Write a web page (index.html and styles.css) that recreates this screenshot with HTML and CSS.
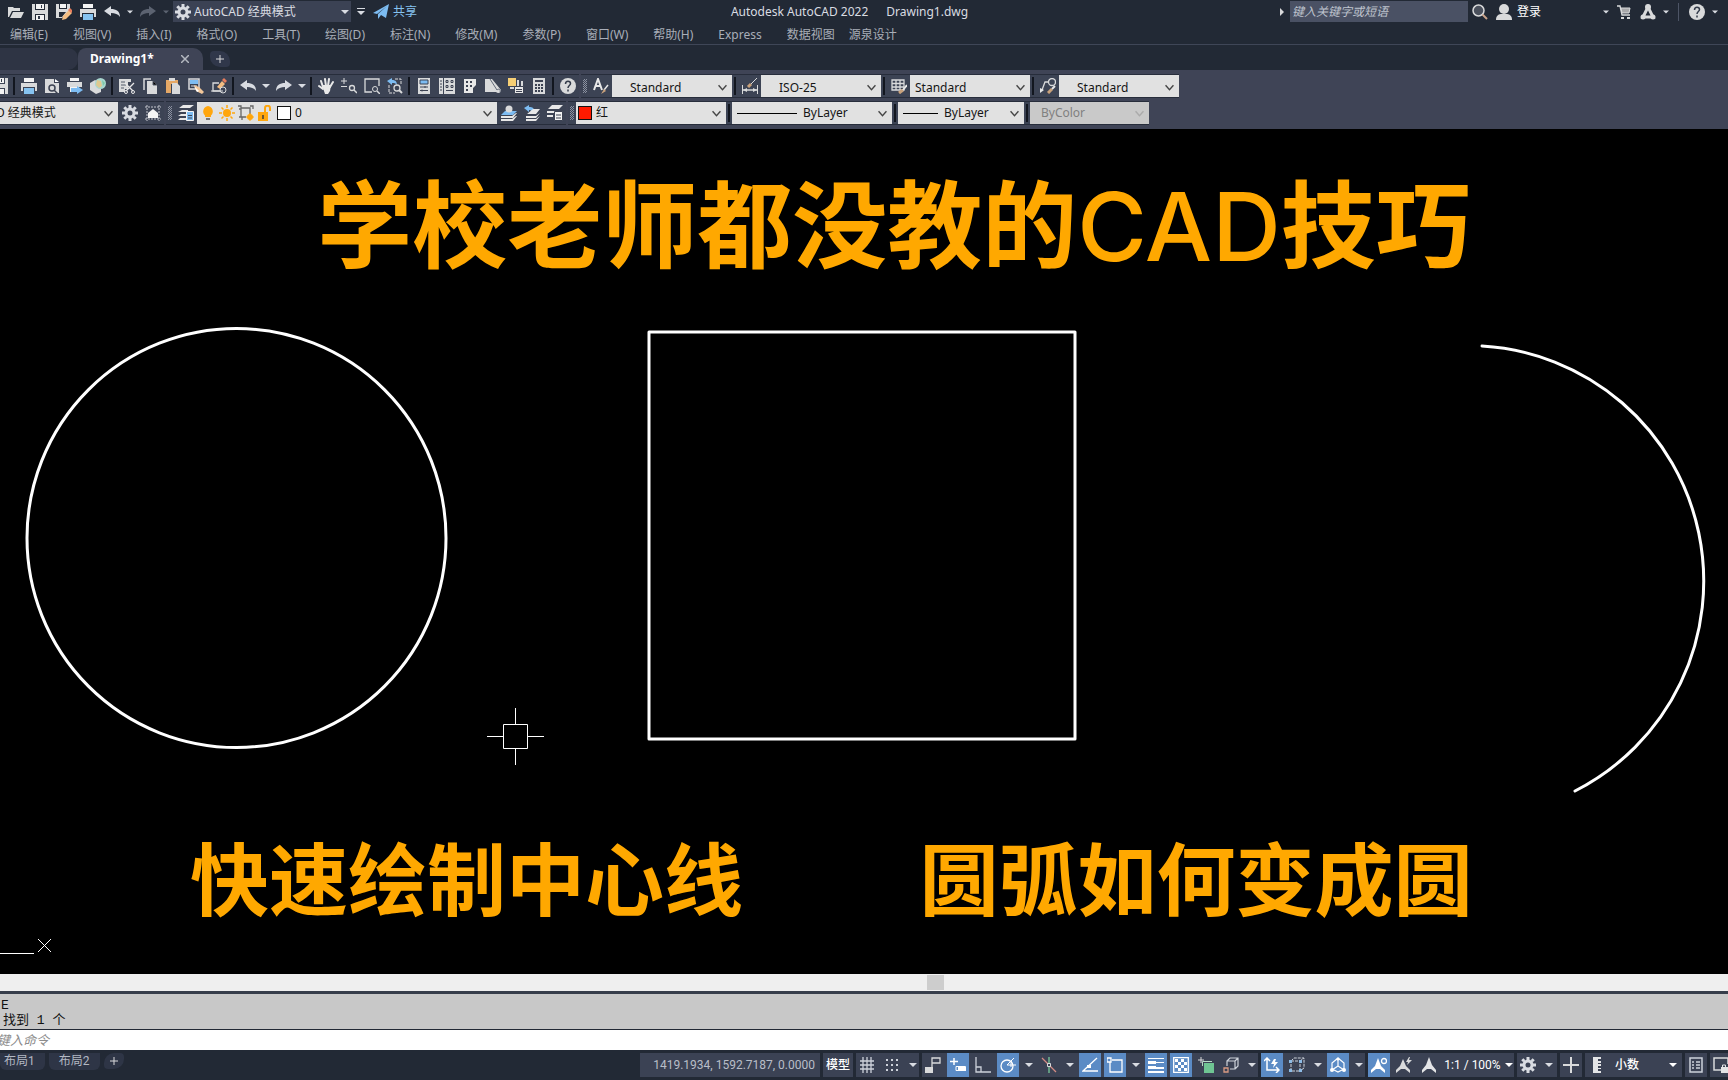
FILE: index.html
```html
<!DOCTYPE html>
<html lang="zh-CN">
<head>
<meta charset="utf-8">
<meta name="viewport" content="width=device-width, initial-scale=1">
<title>Autodesk AutoCAD 2022 - Drawing1.dwg</title>
<link rel="stylesheet" href="styles.css">
</head>
<body>
<svg class="sprite" aria-hidden="true">
  <symbol id="open" viewBox="0 0 16 16"><path fill="#d9dadb" d="M0 13V3h5l1 1h6v3H4L1 13zM5 8h11l-3 6H2z"/></symbol>
  <symbol id="save" viewBox="0 0 16 16"><path fill="#d9dadb" fill-rule="evenodd" d="M0 0h16v16H0zM3 0v6h10V0zM3 10v6h10v-6z"/><path fill="#f4f4f4" d="M4 0h8v5H4zM4 11h8v5H4z"/><path fill="#333b4a" d="M6 12h2v3H6zM9 1h1v3H9z"/></symbol>
  <symbol id="saveas" viewBox="0 0 16 16"><path fill="#d9dadb" fill-rule="evenodd" d="M0 0h14v6l-8 8H0zM3 0v5h8V0zM3 8v5h3l4-5z"/><path fill="#f4f4f4" d="M4 0h6v4H4z"/><path fill="#f4bd82" d="M7 12l6-6 3 3-6 6-4 1z"/><path fill="#e87d5c" d="M12 6l2-2 3 3-2 2z"/></symbol>
  <symbol id="print" viewBox="0 0 16 16"><path fill="#f4f4f4" d="M3 0h10v4H3z"/><path fill="#d9dadb" d="M0 5h16v8h-2V9H2v4H0z"/><path fill="#86c3f0" d="M3 10h10v6H3z"/></symbol>
  <symbol id="undo" viewBox="0 0 16 16"><path fill="currentColor" d="M0 7l7-5v3c5 0 9 2 9 8-2-3-5-4-9-4v3z"/></symbol>
  <symbol id="redo" viewBox="0 0 16 16"><path fill="currentColor" d="M16 7L9 2v3c-5 0-9 2-9 8 2-3 5-4 9-4v3z"/></symbol>
  <symbol id="caret" viewBox="0 0 8 8"><path fill="currentColor" d="M0 2h8L4 6z"/></symbol>
  <symbol id="morecaret" viewBox="0 0 8 8"><path fill="currentColor" d="M0 0h8v1H0zM0 3h8L4 7z"/></symbol>
  <symbol id="gear" viewBox="0 0 16 16"><circle cx="8" cy="8" r="4" fill="none" stroke="currentColor" stroke-width="3"/><path stroke="currentColor" stroke-width="3" d="M8 0v3M8 13v3M0 8h3M13 8h3M2.3 2.3l2 2M11.700 11.700l2 2M2.300 13.700l2-2M11.700 4.300l2-2"/></symbol>
  <symbol id="plane" viewBox="0 0 16 16"><path fill="#7dbcf2" d="M0 9L16 0l-3 14-5-3-3 4v-5L14 2 4 10z"/></symbol>
  <symbol id="find" viewBox="0 0 16 16"><circle cx="6.500" cy="6.500" r="5.500" fill="#4a505c" stroke="#d9dadb" stroke-width="1.500"/><path stroke="#c9a28a" stroke-width="2" d="M10.500 10.500l4.500 4.500"/></symbol>
  <symbol id="user" viewBox="0 0 16 16"><circle cx="8" cy="5" r="5" fill="#d9dadb"/><path fill="#d9dadb" d="M0 16c0-5 3-6 6-6h4c3 0 6 1 6 6z"/></symbol>
  <symbol id="cart" viewBox="0 0 16 16"><path fill="none" stroke="#d9dadb" stroke-width="1.300" d="M1 2h3l2 9h8"/><path fill="#a9a9ab" stroke="#d9dadb" d="M5 4h9l-1 5H6z"/><path fill="#d9dadb" d="M5 13h3v2H5zM11 13h3v2h-3z"/></symbol>
  <symbol id="app" viewBox="0 0 16 16"><path fill="none" stroke="#d9dadb" stroke-width="3" d="M8 3L3 13h10z"/><circle cx="8" cy="3" r="3" fill="#d9dadb"/><circle cx="3" cy="13" r="2.500" fill="#d9dadb"/><circle cx="13" cy="13" r="2.500" fill="#d9dadb"/></symbol>
  <symbol id="help" viewBox="0 0 16 16"><circle cx="8" cy="8" r="8" fill="#d9dadb"/><path fill="none" stroke="#333b4a" stroke-width="1.500" d="M5.500 6c0-4 5-3.500 5-.5C10.500 7.500 8 7.500 8 10M8 11.500v2"/></symbol>
  <symbol id="preview" viewBox="0 0 16 16"><path fill="#d9dadb" d="M1 1h9v4h5v10H1z"/><path fill="#fff" d="M11 1l4 3h-4z"/><circle cx="8" cy="10" r="3" fill="#d9dadb" stroke="#3c4252" stroke-width="1.500"/><path stroke="#3c4252" stroke-width="1.500" d="M10 12l4 4"/></symbol>
  <symbol id="publish" viewBox="0 0 16 16"><path fill="#f4f4f4" d="M3 0h9v3H3z"/><path fill="#d9dadb" d="M0 4h15v5H0z"/><path fill="#f4f4f4" d="M3 9h9v5H3z"/><path fill="#7dbcf2" d="M4 10h6V8l6 4-6 4v-2H4z"/></symbol>
  <symbol id="globe" viewBox="0 0 16 16"><path fill="#d9dadb" d="M0 5l5-3 6 3v9l-5 2-6-4z"/><circle cx="10.500" cy="5.500" r="5.500" fill="#a8d6ce"/><path fill="#dfc98f" d="M7 2l4 1 1 5-3 2-3-3z"/><path fill="#7dc7a8" d="M12 2l3 3-2 3z"/></symbol>
  <symbol id="cut" viewBox="0 0 16 16"><path fill="#d9dadb" d="M0 1h12v3H9v7H6v3H0z"/><path stroke="#555c6b" d="M2 4h4M2 7h5M2 10h3"/><path fill="none" stroke="#e8e8e8" stroke-width="1.300" d="M6 5l8 8M15 5l-8 8"/><circle cx="7" cy="14" r="1.500" fill="none" stroke="#e8e8e8"/><circle cx="14" cy="14" r="1.500" fill="none" stroke="#e8e8e8"/></symbol>
  <symbol id="copy" viewBox="0 0 16 16"><path fill="none" stroke="#d9dadb" stroke-width="1.500" d="M2 12V1h7"/><path fill="#d9dadb" d="M5 3h6l4 4v9H5z"/><path stroke="#555c6b" d="M11 3v4h4"/></symbol>
  <symbol id="paste" viewBox="0 0 16 16"><path fill="#e5a866" d="M1 2h12v4H6v9H1z"/><path fill="#d9dadb" d="M4 0h6v3H4zM7 5h5l3 3v8H7z"/></symbol>
  <symbol id="match" viewBox="0 0 16 16"><path fill="none" stroke="#d9dadb" stroke-width="1.500" d="M1 1h10v10H1z"/><path fill="#7dbcf2" d="M2 2h8v4H2z"/><path stroke="#d9dadb" d="M3 8h6"/><path fill="#f2c79a" d="M6 7l5 2 5 5-2 2-6-3z"/><path fill="#fff" d="M6 8l5 5-2 1z"/></symbol>
  <symbol id="blockedit" viewBox="0 0 16 16"><path fill="none" stroke="#d9dadb" stroke-width="1.300" d="M8 5H2v8h7"/><path stroke="#d9dadb" d="M0 13h12"/><path fill="#f4bd82" d="M6 9l5-6 3 3-5 5z"/><path fill="#e87d5c" d="M11 2l2-2 3 3-2 2z"/><circle cx="12" cy="12" r="3" fill="none" stroke="#d9dadb"/></symbol>
  <symbol id="hand" viewBox="0 0 16 16"><path fill="none" stroke="#e8e8e8" stroke-width="2" stroke-linecap="round" d="M5 9L3 3M8 8L7 1M10 8l1-7M12 9l3-5M5 11L1 8"/><path fill="#e8e8e8" d="M4 7h9l-1 6-2 3H7z"/></symbol>
  <symbol id="zoompm" viewBox="0 0 16 16"><path stroke="#d9dadb" d="M3 0v6M0 3h6M0 8.500h6"/><circle cx="11" cy="10" r="2.500" fill="none" stroke="#d9dadb" stroke-width="1.300"/><path stroke="#d9dadb" stroke-width="1.500" d="M13 12l3 3"/></symbol>
  <symbol id="zoomwin" viewBox="0 0 16 16"><path fill="none" stroke="#d9dadb" stroke-width="1.300" d="M8 14H1V1h14v7"/><circle cx="11" cy="11" r="2.500" fill="none" stroke="#d9dadb"/><path stroke="#d9dadb" stroke-width="1.500" d="M13 13l3 3"/></symbol>
  <symbol id="zoomprev" viewBox="0 0 16 16"><path fill="none" stroke="#d9dadb" stroke-dasharray="3 1" d="M2 7v8h6M8 1h6v6"/><path fill="#7dbcf2" d="M0 3l5-3v2c4 0 5 2 5 6-1-3-2-3-5-3v2z"/><circle cx="10" cy="10" r="3" fill="none" stroke="#d9dadb" stroke-width="1.300"/><path stroke="#d9dadb" stroke-width="2" d="M12 12l3 3"/></symbol>
  <symbol id="props" viewBox="0 0 16 16"><path fill="#d9dadb" d="M2 0h12v16H2z"/><path fill="#7dbcf2" stroke="#3c4252" d="M4 2h8v4H4z"/><path stroke="#3c4252" d="M4 9h8M4 12.500h8M9 8v2M6 11.500v2"/></symbol>
  <symbol id="center" viewBox="0 0 16 16"><path fill="#d9dadb" d="M0 0h4v16H0zM5 0h11v16H5z"/><path stroke="#3c4252" d="M1 3h2M1 6h2M1 9h2M1 12h2"/><path fill="none" stroke="#3c4252" d="M7 2.500h2v2H7zM12 2.500h2v2h-2zM7 7.500h2v2H7zM12 7.500h2v2h-2zM7 12.500h7"/></symbol>
  <symbol id="palette" viewBox="0 0 16 16"><path fill="#e8e8e8" d="M2 1h12v6l-3 3v5H2z"/><path fill="#3c4252" d="M4 3h2v2H4zM8 3h2v2H8zM4 7h2v2H4zM8 7h2v2H8zM4 11h2v2H4z"/></symbol>
  <symbol id="sheet" viewBox="0 0 16 16"><path fill="#d9dadb" d="M0 1h7l9 11c0 3-3 4-5 2H0z"/><path fill="none" stroke="#626978" d="M5 1l7 11c2-2 4 0 3 2"/></symbol>
  <symbol id="markup" viewBox="0 0 16 16"><path fill="#f6cf75" d="M0 0h8v8H0z"/><path stroke="#d9dadb" stroke-width="2" d="M10 2v7M14 3v7M2 10h5"/><path fill="#e8e8e8" stroke="#3c4252" d="M6.500 8.500h9v7h-9z"/><path stroke="#3c4252" d="M8 11.500h6M8 13.500h6"/></symbol>
  <symbol id="calc" viewBox="0 0 16 16"><path fill="#d9dadb" d="M2 0h12v16H2z"/><path fill="#3c4252" d="M4 2h8v2H4zM4 6h2v2H4zM7 6h2v2H7zM10 6h2v2h-2zM4 9h2v2H4zM7 9h2v2H7zM10 9h2v2h-2zM4 12h2v2H4zM7 12h2v2H7zM10 12h2v2h-2z"/></symbol>
  <symbol id="textstyle" viewBox="0 0 16 16"><path fill="none" stroke="#e8e8e8" stroke-width="2" d="M1 12L5 1l4 11M2 8h6"/><path stroke="#e8e8e8" stroke-width="1.500" d="M15 7l-4 5"/><path fill="#c9a27c" d="M11 11l2 2-5 3z"/></symbol>
  <symbol id="dimstyle" viewBox="0 0 16 16"><path stroke="#d9dadb" d="M.5 7v9M15.500 7v9"/><path stroke="#d9dadb" stroke-width="1.500" d="M1 12h14"/><path fill="#d9dadb" d="M1 12l4-2v4zM15 12l-4-2v4z"/><path stroke="#c9a27c" stroke-width="3" d="M6 9l3-3"/><path stroke="#d9dadb" d="M9 6l6-6"/></symbol>
  <symbol id="tablestyle" viewBox="0 0 16 16"><path fill="none" stroke="#d9dadb" stroke-width="1.300" d="M1 2h12v10H1zM1 5.500h12M1 9h12M5 2v10M9 2v10"/><path stroke="#c9a27c" stroke-width="3" d="M8 15l4-3"/><path stroke="#e8e8e8" stroke-width="2" d="M12 12l4-5"/></symbol>
  <symbol id="leader" viewBox="0 0 16 16"><circle cx="12" cy="4" r="3.500" fill="none" stroke="#d9dadb" stroke-width="1.300"/><path fill="none" stroke="#d9dadb" stroke-width="1.300" d="M9 4H5L2 12"/><path fill="#e8e8e8" d="M0 10l4 2-4 3z"/><path stroke="#c9a27c" stroke-width="3" d="M8 15l4-4"/><path stroke="#e8e8e8" stroke-width="2" d="M12 11l3-3"/></symbol>
  <symbol id="wsframe" viewBox="0 0 16 16"><path fill="none" stroke="#c4c7ce" stroke-dasharray="2 1" d="M2 0v16M14 0v16M0 2h16M0 14h16"/><path fill="#f4f4f4" d="M3 8l5-4 5 4v5H3z"/></symbol>
  <symbol id="layers" viewBox="0 0 16 16"><path fill="#e8e8e8" d="M5 0h11l-4 3H1zM4 5h6v2H0zM3 9h5v2H0zM2 13h6v2H0z"/><path fill="#7dbcf2" stroke="#f4f4f4" d="M8.500 6.500h7v9h-7z"/><path stroke="#3c4252" d="M10 10.500h4M10 13h4"/></symbol>
  <symbol id="layercur" viewBox="0 0 16 16"><path fill="#7dbcf2" d="M4 6h12l-4 4H0z"/><circle cx="8" cy="4" r="3.500" fill="#d9dadb"/><path fill="#e8e8e8" d="M0 11h11l4-3h1l-4 5H0zM0 14h11l4-3h1l-4 5H0z"/></symbol>
  <symbol id="layerprev" viewBox="0 0 16 16"><path fill="#7dbcf2" d="M0 3l5-3v2c4 0 5 1 5 4H7c0-1-1-1-2-1v2z"/><path fill="#e8e8e8" d="M9 4h7l-4 5H3zM2 11h10l4-3-4 5H2zM2 14h10l4-3-4 5H2z"/></symbol>
  <symbol id="layerstate" viewBox="0 0 16 16"><path fill="#e8e8e8" d="M5 0h11l-4 4H1zM0 6h8v2H0zM0 10h6v2H0z"/><path fill="#f4f4f4" stroke="#3c4252" d="M7.500 6.500h8v9h-8z"/><path stroke="#3c4252" d="M9 10h5M9 13h5"/></symbol>
  <symbol id="bulb" viewBox="0 0 16 16"><path fill="#ffa60d" d="M8 1a5.500 5.500 0 0 1 3 9.500V12H5v-1.500A5.500 5.500 0 0 1 8 1z"/><path fill="#777" d="M6 13h4v2H6z"/></symbol>
  <symbol id="sun" viewBox="0 0 16 16"><circle cx="8" cy="8" r="4" fill="#ffa60d"/><path stroke="#ffa60d" stroke-width="1.500" d="M8 0v3M8 13v3M0 8h3M13 8h3M2.500 2.500l2 2M11.500 11.500l2 2M2.500 13.500l2-2M11.500 4.500l2-2"/></symbol>
  <symbol id="vpfreeze" viewBox="0 0 16 16"><path fill="none" stroke="#666" stroke-width="1.300" d="M3 3h9v6M3 3v9h5M0 1h3v3H1M12 1h3v3M1 12h3v3"/><circle cx="12" cy="12" r="3" fill="#ffa60d"/><path stroke="#ffa60d" d="M12 8v8M8 12h8"/></symbol>
  <symbol id="unlock" viewBox="0 0 16 16"><path fill="#ffa60d" d="M1 7h10v9H1z"/><path fill="none" stroke="#ffa60d" stroke-width="2" d="M8 8V3c0-3 5-3 5 0v3"/><path fill="#6b5630" d="M5 10h2v4H5z"/></symbol>
  <symbol id="chev" viewBox="0 0 8 8"><path fill="none" stroke="currentColor" stroke-width="1.200" d="M.5 2L4 6l3.500-4"/></symbol>
  <symbol id="grid" viewBox="0 0 16 16"><path stroke="#cdd2da" stroke-width="1.300" d="M4 0v16M8 0v16M12 0v16M1 4h14M1 8h14M1 12h14"/></symbol>
  <symbol id="dots" viewBox="0 0 16 16"><path stroke="#cdd2da" stroke-width="2" stroke-dasharray="2 3" d="M2 3h12M2 8h12M2 13h12"/></symbol>
  <symbol id="infer" viewBox="0 0 16 16"><path fill="#d9dadb" d="M0 10h8v6H0z"/><path fill="none" stroke="#d9dadb" stroke-width="1.300" d="M7 10V1h8v5H7"/></symbol>
  <symbol id="dyn" viewBox="0 0 16 16"><path stroke="#fff" stroke-width="1.500" d="M4 1v7M0 4.500h8"/><path fill="none" stroke="#fff" d="M6 9.500h9.500v4H6z"/><path fill="#fff" d="M8 10h8v4H8z"/></symbol>
  <symbol id="ortho" viewBox="0 0 16 16"><path fill="none" stroke="#cdd2da" stroke-width="1.300" d="M1 0v15h15M1 10h5v5"/></symbol>
  <symbol id="polar" viewBox="0 0 16 16"><circle cx="7" cy="9" r="6" fill="none" stroke="#fff" stroke-width="1.300"/><path fill="none" stroke="#fff" d="M16 8H7l7-7M11 4v6"/></symbol>
  <symbol id="iso" viewBox="0 0 16 16"><path stroke="#77c99a" stroke-width="1.300" d="M8 0v6M8 10v6"/><path stroke="#d48b84" stroke-width="1.300" d="M1 1l6 6M9 9l6 6"/><path fill="none" stroke="#d9dadb" d="M6.500 6.500h3v3h-3z"/></symbol>
  <symbol id="track" viewBox="0 0 16 16"><path fill="none" stroke="#fff" stroke-width="1.300" d="M15 1L1 14h15"/><path fill="#fff" d="M5 8h4v3H5z"/></symbol>
  <symbol id="osnap" viewBox="0 0 16 16"><path fill="none" stroke="#fff" stroke-width="1.300" d="M5 3h10v12H3V5M0 1h4v4H0z"/></symbol>
  <symbol id="lwt" viewBox="0 0 16 16"><path fill="#fff" d="M0 1h16v1H0zM0 4h8v3H0zM8 5h8v1H8zM0 9h8v3H0zM8 10h8v2H8zM0 14h16v2H0z"/></symbol>
  <symbol id="transp" viewBox="0 0 16 16"><path fill="none" stroke="#fff" stroke-width="1.300" d="M.7.7h14.600v14.600H.7z"/><path stroke="#fff" stroke-width="3" stroke-dasharray="3 3" d="M2 3.500h12M5 6.500h9M2 9.500h12M5 12.500h9"/></symbol>
  <symbol id="cycle" viewBox="0 0 16 16"><path stroke="#d9dadb" d="M3 0v6M0 3h6"/><path fill="#6fc593" d="M6 6h10v10H6z"/><path fill="none" stroke="#b8dcc7" d="M4.500 9V4.500H14"/></symbol>
  <symbol id="osnap3" viewBox="0 0 16 16"><path fill="none" stroke="#cdd2da" stroke-width="1.200" d="M4 9V4h8v8H7M4 4l3-3h8v8l-3 3M12 4l3-3"/><path fill="none" stroke="#d99a82" stroke-width="1.300" d="M1 11h4v4H1z"/></symbol>
  <symbol id="ducs" viewBox="0 0 16 16"><path fill="none" stroke="#fff" stroke-width="1.500" d="M3 2v11h12M0 4l3-3 3 3M12 10l3 3-3 3"/><path fill="#fff" d="M10 2L7 7h3l-1 4 5-6h-3l1-3z"/></symbol>
  <symbol id="filter" viewBox="0 0 16 16"><path fill="none" stroke="#cdd2da" stroke-dasharray="3 1" d="M2 4h9v10H2zM2 4l3-3h10v10l-4 3M11 4l4-3"/><path fill="#8ebce6" d="M0 3h3v3H0zM10 3h3v3h-3zM0 12h3v3H0zM10 12h3v3h-3z"/></symbol>
  <symbol id="gizmo" viewBox="0 0 16 16"><path fill="none" stroke="#fff" stroke-width="1.200" d="M8 1l6 5v6l-6 3-6-3V6zM8 1v8l6 4M8 9l-6 4"/><circle cx="8" cy="2" r="1.500" fill="#fff"/><circle cx="2" cy="13" r="2" fill="#fff"/><circle cx="14" cy="13" r="2" fill="#fff"/></symbol>
  <symbol id="anno" viewBox="0 0 16 16"><path fill="#e3e4e6" d="M8 0l3 8 4 5v3l-5-4H6l-5 4v-3l4-5z"/></symbol>
  <symbol id="annovis" viewBox="0 0 16 16"><path fill="#fff" d="M7 1l3 8 4 4v3l-5-4H5l-5 4v-3l4-4z"/><circle cx="13" cy="4" r="2.500" fill="none" stroke="#fff" stroke-width="1.300"/></symbol>
  <symbol id="annoauto" viewBox="0 0 16 16"><path fill="#d9dadb" d="M7 2l3 7 4 4v3l-5-4H5l-5 4v-3l4-4zM13 0l-3 5h2l-1 3 5-5h-3l1-3z"/></symbol>
  <symbol id="plus" viewBox="0 0 16 16"><path stroke="#d9dadb" stroke-width="2" d="M8 0v16M0 8h16"/></symbol>
  <symbol id="ruler" viewBox="0 0 16 16"><path fill="#e3e4e6" d="M4 0h8v2H9v2h3v2H9v1h3v2H9v2h3v1H9v2h3v2H4z"/></symbol>
  <symbol id="quick" viewBox="0 0 16 16"><path fill="none" stroke="#cdd2da" stroke-width="1.500" d="M2 1h12v14H2z"/><path stroke="#cdd2da" stroke-width="1.500" d="M4 5h2M8 5h4M4 8h2M8 8h4M4 11h2M8 11h4"/></symbol>
  <symbol id="lockui" viewBox="0 0 16 16"><path fill="none" stroke="#d9dadb" stroke-width="1.500" d="M8 13H1V1h14v6"/><path fill="#e3e4e6" d="M8 10h8v6H8z"/><path fill="none" stroke="#e3e4e6" d="M9.500 10V8h3v2"/></symbol>
</svg>

<header class="titlebar">
  <div class="quick">
    <button aria-label="打开"><svg><use href="#open"/></svg></button>
    <button aria-label="保存"><svg><use href="#save"/></svg></button>
    <button aria-label="另存为"><svg><use href="#saveas"/></svg></button>
    <button aria-label="打印"><svg><use href="#print"/></svg></button>
    <button aria-label="放弃"><svg><use href="#undo"/></svg></button>
    <button class="drop" aria-label="放弃列表"><svg><use href="#caret"/></svg></button>
    <button class="off" aria-label="重做"><svg><use href="#redo"/></svg></button>
    <button class="drop off" aria-label="重做列表"><svg><use href="#caret"/></svg></button>
  </div>
  <label class="workspace">
    <svg><use href="#gear"/></svg>
    <select aria-label="工作空间"><option>AutoCAD 经典模式</option></select>
    <svg class="tiny"><use href="#caret"/></svg>
  </label>
  <button class="custom" aria-label="自定义"><svg class="tiny"><use href="#morecaret"/></svg></button>
  <button class="share"><svg><use href="#plane"/></svg>共享</button>
  <h1 class="title"><span>Autodesk AutoCAD 2022</span><span>Drawing1.dwg</span></h1>
  <div class="account">
    <span class="expand"></span>
    <input class="search" type="text" placeholder="键入关键字或短语" aria-label="搜索">
    <button class="find" aria-label="查找"><svg><use href="#find"/></svg></button>
    <button class="login"><svg><use href="#user"/></svg>登录</button>
    <button class="drop" aria-label="登录菜单"><svg><use href="#caret"/></svg></button>
    <button class="square" aria-label="购物车"><svg><use href="#cart"/></svg></button>
    <button class="square" aria-label="应用"><svg><use href="#app"/></svg></button>
    <button class="drop" aria-label="应用菜单"><svg><use href="#caret"/></svg></button>
    <span class="bar"></span>
    <button class="square" aria-label="帮助"><svg><use href="#help"/></svg></button>
    <button class="drop" aria-label="帮助菜单"><svg><use href="#caret"/></svg></button>
  </div>
</header>

<nav class="menu">
  <a href="#edit">编辑(E)</a><a href="#view">视图(V)</a><a href="#insert">插入(I)</a><a href="#format">格式(O)</a><a href="#tools">工具(T)</a><a href="#draw">绘图(D)</a><a href="#dim">标注(N)</a><a href="#modify">修改(M)</a><a href="#param">参数(P)</a><a href="#window">窗口(W)</a><a href="#helpmenu">帮助(H)</a><a href="#express">Express</a><a class="addon" href="#data">数据视图</a><a class="addon" href="#yuanquan">源泉设计</a>
</nav>

<div class="tabs">
  <span class="tab-start"></span>
  <div class="tab"><a href="#drawing">Drawing1*</a><button aria-label="关闭"><svg viewBox="0 0 8 8"><path stroke="#b4b8c0" stroke-width="1.500" d="M0 0l8 8M8 0L0 8"/></svg></button></div>
  <button class="newtab" aria-label="新图形"><svg class="tiny"><use href="#plus"/></svg></button>
</div>

<div class="toolbars">
  <div class="row">
    <div class="group first">
      <button aria-label="保存"><svg><use href="#save"/></svg></button><i class="sep"></i>
      <button aria-label="打印"><svg><use href="#print"/></svg></button>
      <button aria-label="打印预览"><svg><use href="#preview"/></svg></button>
      <button aria-label="发布"><svg><use href="#publish"/></svg></button>
      <button aria-label="三维打印"><svg><use href="#globe"/></svg></button><i class="sep"></i>
      <button aria-label="剪切"><svg><use href="#cut"/></svg></button>
      <button aria-label="复制"><svg><use href="#copy"/></svg></button>
      <button aria-label="粘贴"><svg><use href="#paste"/></svg></button>
      <button aria-label="特性匹配"><svg><use href="#match"/></svg></button>
      <button aria-label="块编辑器"><svg><use href="#blockedit"/></svg></button><i class="sep"></i>
      <button aria-label="放弃"><svg><use href="#undo"/></svg></button>
      <button class="drop" aria-label="放弃列表"><svg><use href="#caret"/></svg></button>
      <button aria-label="重做"><svg><use href="#redo"/></svg></button>
      <button class="drop" aria-label="重做列表"><svg><use href="#caret"/></svg></button><i class="sep"></i>
      <button aria-label="平移"><svg><use href="#hand"/></svg></button>
      <button aria-label="实时缩放"><svg><use href="#zoompm"/></svg></button>
      <button aria-label="窗口缩放"><svg><use href="#zoomwin"/></svg></button>
      <button aria-label="缩放上一个"><svg><use href="#zoomprev"/></svg></button><i class="sep"></i>
      <button aria-label="特性"><svg><use href="#props"/></svg></button>
      <button aria-label="设计中心"><svg><use href="#center"/></svg></button>
      <button aria-label="工具选项板"><svg><use href="#palette"/></svg></button>
      <button aria-label="图纸集"><svg><use href="#sheet"/></svg></button>
      <button aria-label="标记集"><svg><use href="#markup"/></svg></button>
      <button aria-label="计算器"><svg><use href="#calc"/></svg></button><i class="sep"></i>
      <button aria-label="帮助"><svg><use href="#help"/></svg></button>
    </div>
    <div class="group spaced">
      <i class="grip"></i>
      <button aria-label="文字样式"><svg><use href="#textstyle"/></svg></button>
      <label class="combo style"><select aria-label="文字样式"><option>Standard</option></select><svg><use href="#chev"/></svg></label><i class="sep"></i>
      <button aria-label="标注样式"><svg><use href="#dimstyle"/></svg></button>
      <label class="combo style"><select aria-label="标注样式"><option>ISO-25</option></select><svg><use href="#chev"/></svg></label><i class="sep"></i>
      <button aria-label="表格样式"><svg><use href="#tablestyle"/></svg></button>
      <label class="combo style flush"><select aria-label="表格样式"><option>Standard</option></select><svg><use href="#chev"/></svg></label><i class="sep"></i>
      <button aria-label="多重引线样式"><svg><use href="#leader"/></svg></button>
      <label class="combo style"><select aria-label="多重引线样式"><option>Standard</option></select><svg><use href="#chev"/></svg></label>
    </div>
  </div>
  <div class="row">
    <div class="group">
      <label class="combo space"><select aria-label="工作空间"><option>AutoCAD 经典模式</option></select><svg><use href="#chev"/></svg></label>
      <button aria-label="工作空间设置"><svg><use href="#gear"/></svg></button>
      <button aria-label="我的工作空间"><svg><use href="#wsframe"/></svg></button>
    </div>
    <div class="group spaced">
      <i class="grip"></i>
      <button aria-label="图层特性"><svg><use href="#layers"/></svg></button>
      <label class="combo layer"><span class="states"><svg><use href="#bulb"/></svg><svg><use href="#sun"/></svg><svg><use href="#vpfreeze"/></svg><svg><use href="#unlock"/></svg></span><i class="swatch white"></i><select aria-label="图层"><option>0</option></select><svg><use href="#chev"/></svg></label>
      <button aria-label="置为当前"><svg><use href="#layercur"/></svg></button>
      <button aria-label="上一个图层"><svg><use href="#layerprev"/></svg></button>
      <button aria-label="图层状态"><svg><use href="#layerstate"/></svg></button>
    </div>
    <div class="group spaced">
      <i class="grip"></i>
      <label class="combo color"><i class="swatch red"></i><select aria-label="颜色"><option>红</option></select><svg><use href="#chev"/></svg></label><i class="sep"></i>
      <label class="combo ltype"><i class="line"></i><select aria-label="线型"><option>ByLayer</option></select><svg><use href="#chev"/></svg></label><i class="sep"></i>
      <label class="combo lweight"><i class="line"></i><select aria-label="线宽"><option>ByLayer</option></select><svg><use href="#chev"/></svg></label><i class="sep"></i>
      <label class="combo disabled"><select aria-label="打印样式" disabled><option>ByColor</option></select><svg><use href="#chev"/></svg></label>
    </div>
  </div>
</div>

<main class="canvas">
  <svg class="drawing" viewBox="0 0 1728 845" preserveAspectRatio="xMidYMid meet" fill="none" stroke="#fff" stroke-width="3">
    <circle cx="236.500" cy="409" r="209.500"/>
    <path stroke-linejoin="round" d="M649 203h426v407H649z"/>
    <path stroke-linecap="round" d="M1482 217A235.500 235.500 0 0 1 1575 662"/>
    <path stroke-width="1" d="M503.500 595.500h24v24h-24zM515.500 595V579M515.500 620v16M503 607.500h-16M528 607.500h16M0 824.500h34M38 810l13 13M51 810l-13 13"/>
  </svg>
  <h2 class="caption top">学校老师都没教的<span>CAD</span>技巧</h2>
  <h2 class="caption left">快速绘制中心线</h2>
  <h2 class="caption right">圆弧如何变成圆</h2>
</main>

<div class="scroll"><i class="thumb"></i></div>
<section class="command">
  <pre class="history">E
<span>找到 1 个</span></pre>
  <input type="text" placeholder="键入命令" aria-label="命令行">
</section>

<footer class="status">
  <div class="layouts"><a href="#layout1">布局1</a><a href="#layout2">布局2</a><button aria-label="新建布局"><svg class="tiny"><use href="#plus"/></svg></button></div>
  <output class="coords">1419.1934, 1592.7187, 0.0000</output>
  <button class="model">模型</button>
  <div class="cells">
    <button aria-label="栅格"><svg><use href="#grid"/></svg></button>
    <button aria-label="捕捉"><svg><use href="#dots"/></svg></button>
    <button class="drop" aria-label="捕捉设置"><svg><use href="#caret"/></svg></button>
  </div>
  <div class="cells">
    <button aria-label="推断约束"><svg><use href="#infer"/></svg></button>
    <button class="on" aria-label="动态输入"><svg><use href="#dyn"/></svg></button>
    <button aria-label="正交"><svg><use href="#ortho"/></svg></button>
    <button class="on" aria-label="极轴追踪"><svg><use href="#polar"/></svg></button>
    <button class="drop" aria-label="极轴设置"><svg><use href="#caret"/></svg></button>
    <button aria-label="等轴测"><svg><use href="#iso"/></svg></button>
    <button class="drop" aria-label="等轴测设置"><svg><use href="#caret"/></svg></button>
    <button class="on" aria-label="对象追踪"><svg><use href="#track"/></svg></button>
    <button class="on" aria-label="对象捕捉"><svg><use href="#osnap"/></svg></button>
    <button class="drop" aria-label="对象捕捉设置"><svg><use href="#caret"/></svg></button>
    <button class="on" aria-label="线宽"><svg><use href="#lwt"/></svg></button>
    <button class="on" aria-label="透明度"><svg><use href="#transp"/></svg></button>
    <button aria-label="选择循环"><svg><use href="#cycle"/></svg></button>
    <button aria-label="三维对象捕捉"><svg><use href="#osnap3"/></svg></button>
    <button class="drop" aria-label="三维捕捉设置"><svg><use href="#caret"/></svg></button>
  </div>
  <div class="cells">
    <button class="on" aria-label="动态 UCS"><svg><use href="#ducs"/></svg></button>
    <button aria-label="选择过滤"><svg><use href="#filter"/></svg></button>
    <button class="drop" aria-label="过滤设置"><svg><use href="#caret"/></svg></button>
    <button class="on" aria-label="小控件"><svg><use href="#gizmo"/></svg></button>
    <button class="drop" aria-label="小控件设置"><svg><use href="#caret"/></svg></button>
  </div>
  <div class="cells">
    <button class="on" aria-label="注释可见性"><svg><use href="#annovis"/></svg></button>
    <button aria-label="自动缩放"><svg><use href="#annoauto"/></svg></button>
    <button aria-label="注释比例"><svg><use href="#anno"/></svg></button>
    <button class="scale">1:1 / 100%<svg class="tiny"><use href="#caret"/></svg></button>
  </div>
  <div class="cells settings">
    <button aria-label="工作空间"><svg><use href="#gear"/></svg></button>
    <button class="drop" aria-label="工作空间列表"><svg><use href="#caret"/></svg></button>
  </div>
  <div class="cells"><button aria-label="注释监视器"><svg><use href="#plus"/></svg></button></div>
  <div class="cells">
    <button class="units"><svg><use href="#ruler"/></svg>小数<svg class="tiny"><use href="#caret"/></svg></button>
  </div>
  <div class="cells"><button aria-label="快捷特性"><svg><use href="#quick"/></svg></button></div>
  <div class="cells"><button aria-label="锁定界面"><svg><use href="#lockui"/></svg></button></div>
</footer>
</body>
</html>
```

FILE: styles.css
```css
* { box-sizing: border-box; }

body {
  margin: 0;
  min-height: 100vh;
  display: flex;
  flex-direction: column;
  overflow-x: hidden;
  background: #222935;
  color: #d9dce2;
  font: 12px/16px "Noto Sans", "Noto Sans CJK SC", sans-serif;
}

button, input, select { font: inherit; color: inherit; }
button {
  display: flex;
  align-items: center;
  justify-content: center;
  flex: none;
  padding: 0;
  border: 0;
  background: none;
  white-space: nowrap;
}
select {
  appearance: none;
  border: 0;
  padding: 0;
  margin: 0;
  background: none;
  flex: 1;
  min-width: 0;
}
select:disabled { opacity: 1; }
a { color: inherit; text-decoration: none; white-space: nowrap; }
svg { display: block; width: 16px; height: 16px; flex: none; }
svg.tiny, .drop svg { width: 8px; height: 8px; }
.sprite { position: absolute; width: 0; height: 0; }
.off { color: #5c6371; }

/* title bar */
.titlebar { display: flex; align-items: center; height: 23px; }
.quick { display: flex; align-items: center; padding-left: 4px; width: 173px; }
.quick button { width: 24px; height: 20px; }
.titlebar .drop { width: 12px; }
.titlebar .drop svg { width: 6px; height: 6px; }
.workspace {
  display: flex;
  align-items: center;
  gap: 3px;
  width: 178px;
  height: 21px;
  padding: 0 2px;
  background: #3b4254;
}
.custom { width: 20px; height: 20px; }
.share { gap: 4px; color: #86c3f0; width: 48px; }
.title {
  flex: 1;
  display: flex;
  justify-content: center;
  gap: 18px;
  margin: 0;
  font-size: 12px;
  font-weight: 400;
  white-space: nowrap;
}
.account { display: flex; align-items: center; }
.expand { border: 4px solid transparent; border-left: 4px solid #d9dadb; border-right: 0; margin-right: 6px; }
.search {
  width: 178px;
  height: 21px;
  padding: 0 2px;
  border: 0;
  background: #4a5164;
}
.search::placeholder { color: #bfc4ce; font-style: italic; opacity: 1; }
.find { width: 24px; }
.login { gap: 5px; justify-content: flex-start; width: 108px; padding-left: 4px; color: #fff; }
.square { width: 24px; }
.bar { width: 1px; height: 18px; margin: 0 6px; background: #4d5566; }
.account .drop:last-child { margin-right: 7px; }

/* menu */
.menu {
  display: flex;
  align-items: center;
  gap: 25px;
  height: 22px;
  padding: 2px 10px 0;
  border-bottom: 1px solid #3f4657;
  color: #a9aeb8;
}
.addon + .addon { margin-left: -11px; }

/* file tabs */
.tabs { display: flex; align-items: flex-end; height: 25px; padding-top: 3px; }
.tab-start { width: 78px; height: 22px; border-radius: 0 10px 10px 0; background: #2e3444; }
.tab {
  display: flex;
  align-items: center;
  justify-content: space-between;
  width: 125px;
  height: 22px;
  padding: 0 14px 0 12px;
  border-radius: 8px 10px 0 0;
  background: #3f4456;
  color: #fff;
  font-weight: 700;
}
.tab button svg { width: 8px; height: 8px; }
.newtab { width: 20px; height: 16px; margin: 0 0 3px 7px; border-radius: 4px 10px 4px 10px; background: #30374a; }

/* toolbars */
.toolbars {
  display: flex;
  flex-direction: column;
  gap: 3px;
  padding: 4px 0;
  background: #3f4456;
}
.row { display: flex; height: 24px; }
.group {
  display: flex;
  align-items: center;
  border: solid #272d3b;
  border-width: 1px 0;
  background: #3c4354;
}
.group.first { margin-left: -12px; }
.group.spaced { margin-left: 2px; }
.group button { width: 23px; height: 22px; }
.group .drop { width: 13px; }
.sep { width: 6px; height: 18px; flex: none; border: solid #3c4354; border-width: 0 2px; background: #12161f; }
.grip { width: 8px; height: 14px; flex: none; border: solid #3c4354; border-width: 0 2px; background: repeating-conic-gradient(#8b91a0 0 25%, #3c4354 0 50%) 0 0 / 2px 2px; }
.combo {
  display: flex;
  align-items: center;
  flex: none;
  height: 22px;
  padding: 0 5px 0 18px;
  background: #e1e1e1;
  color: #151515;
}
.combo > svg { width: 9px; height: 9px; color: #444; }
.combo.style { width: 120px; padding-top: 3px; }
.combo.flush { padding-left: 5px; }
.combo.space { width: 168px; margin-left: -50px; padding-left: 4px; }
.combo.layer { width: 300px; padding-left: 3px; gap: 4px; }
.combo.color { width: 150px; padding-left: 2px; gap: 4px; }
.combo.ltype { width: 160px; padding-left: 5px; gap: 6px; }
.combo.lweight { width: 126px; padding-left: 5px; gap: 6px; }
.combo.disabled { width: 119px; background: #c9c9c9; color: #808080; padding-left: 11px; }
.combo.disabled > svg { color: #aaa; }
.states { display: flex; gap: 3px; }
.swatch { width: 14px; height: 14px; flex: none; border: 1px solid #111; }
.white { background: #fff; }
.red { background: #ff1a00; }
.line { width: 60px; height: 1px; flex: none; background: #000; }
.lweight .line { width: 35px; }

/* drawing area */
.canvas { flex: 1; position: relative; background: #000; overflow: hidden; }
.drawing { width: 100%; height: 100%; }
.caption {
  position: absolute;
  margin: 0;
  transform: translate(-50%, -50%);
  color: #ffa800;
  font-family: Inter, "Noto Sans CJK SC", sans-serif;
  font-weight: 700;
  white-space: nowrap;
}
.caption span { font-weight: 500; }
.top { left: calc(50% + 30px); top: 98px; font-size: 95px; line-height: 100px; }
.left { left: 27%; top: 89%; font-size: 79px; line-height: 84px; }
.right { left: calc(50% + 332px); top: 89%; font-size: 79px; line-height: 84px; }

/* scrollbar and command line */
.scroll { height: 17px; padding: 1px 0 1px 927px; background: #efefef; }
.thumb { display: block; width: 17px; height: 15px; background: #cdcdcd; }
.command { border-top: 3px solid #363d4a; border-bottom: 1px solid #222935; background: #fff; }
.history {
  margin: 0;
  height: 36px;
  padding: 4px 0 0 1px;
  border-bottom: 1px solid #222935;
  background: #c8c8c8;
  color: #111;
  font: 13px/15px "Liberation Mono", "Noto Sans CJK SC", monospace;
}
.history span { padding-left: 2px; }
.command input {
  display: block;
  width: 100%;
  height: 20px;
  padding: 0;
  margin-left: -3px;
  border: 0;
  background: #fff;
  font-size: 13px;
}
.command input::placeholder { color: #8c8c8c; font-style: italic; opacity: 1; }

/* status bar */
.status {
  display: flex;
  align-items: center;
  gap: 3px;
  height: 29px;
  padding: 2px 0 3px;
  overflow: hidden;
  font-family: Roboto, "Noto Sans CJK SC", sans-serif;
}
.layouts { flex: 1; display: flex; align-self: flex-start; gap: 4px; color: #b3b8c3; }
.layouts a { padding: 0 10px 0 4px; height: 17px; border-radius: 0 0 6px 6px; background: #2e3546; }
.layouts a + a { padding-left: 10px; }
.layouts button { width: 20px; height: 16px; border-radius: 10px 4px 10px 4px; background: #2e3546; }
.coords { width: 180px; height: 24px; padding: 4px 5px 0; background: #3b4254; color: #b9bec8; text-align: right; white-space: nowrap; }
.model { width: 30px; height: 24px; background: #3b4254; color: #fff; font-weight: 500; }
.cells { display: flex; gap: 3px; background: #3b4254; }
.cells button { width: 22px; height: 24px; }
.cells .drop { width: 13px; }
.cells .on { background: #5b8bc5; }
.cells .scale { width: 71px; gap: 4px; color: #fff; }
.cells .units { width: 97px; justify-content: flex-start; gap: 10px; padding: 0 5px 0 4px; color: #fff; font-weight: 500; }
.units .tiny { margin-left: auto; }
.settings { padding-right: 2px; }
.cells:last-child { margin-right: -4px; }
```
